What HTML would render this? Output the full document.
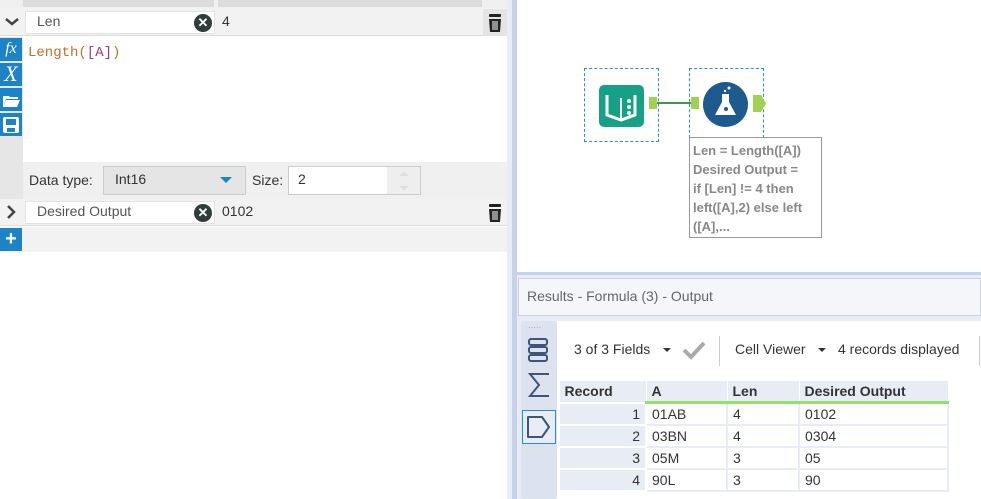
<!DOCTYPE html>
<html><head><meta charset="utf-8"><style>
*{box-sizing:border-box;margin:0;padding:0}
body{width:981px;height:499px;overflow:hidden;background:#fff;font-family:"Segoe UI","Liberation Sans",sans-serif;font-size:14px;color:#333;position:relative}
.a{position:absolute}
</style></head><body>
<div class="a" style="left:0;top:0;width:507px;height:499px;background:#fff"></div>
<div class="a" style="left:0;top:0;width:507px;height:8px;background:#f0f0f0"></div>
<div class="a" style="left:23px;top:0;width:191px;height:7px;background:#dcdcdc"></div>
<div class="a" style="left:218px;top:0;width:264px;height:7px;background:#dcdcdc"></div>
<div class="a" style="left:0;top:8px;width:507px;height:28px;background:#f2f2f2;border-bottom:1px solid #ddd"></div>
<div class="a" style="left:4px;top:9px;font-size:16px;color:#444">
<svg width="16" height="24"><path d="M2 10 L8 15 L14 10" stroke="#444" stroke-width="2.5" fill="none"/></svg></div>
<div class="a" style="left:25px;top:11px;width:190px;height:23px;background:#fff;border:1px solid #e3e3e3"></div>
<div class="a" style="left:37px;top:13px;color:#555">Len</div>
<div class="a" style="left:194px;top:14px;width:18px;height:18px;border-radius:50%;background:#2f3e3a;color:#fff;font-size:13px;font-weight:bold;text-align:center;line-height:18px">✕</div>
<div class="a" style="left:222px;top:13px">4</div>
<div class="a" style="left:483px;top:9px;width:24px;height:27px;background:#e4e4e4"></div>
<svg class="a" style="left:486px;top:12px" width="18" height="22"><rect x="3" y="2" width="12" height="3" rx="1" fill="#222"/><path d="M3 7 H15 L14 20 H4 Z" fill="#222"/><path d="M7 9 V18 M9 9V18 M11 9V18" stroke="#fff" stroke-width="1"/></svg>
<div class="a" style="left:0;top:37px;width:23px;height:162px;background:#e6e6e6"></div>
<div class="a" style="left:0;top:38px;width:22px;height:23px;background:#1c84c6;color:#fff;font-family:'Liberation Serif',serif;font-style:italic;font-size:16px;text-align:center;line-height:22px">fx</div>
<div class="a" style="left:0;top:63px;width:22px;height:23px;background:#1c84c6;color:#fff;font-family:'Liberation Serif',serif;font-style:italic;font-size:22px;text-align:center;line-height:22px">X</div>
<div class="a" style="left:0;top:88px;width:22px;height:23px;background:#1c84c6"><svg width="22" height="23"><path d="M3 8 H9 L10 9 H18 V11 H6 L3 19Z M6 12 H20 L17 19 H3Z" fill="#fff"/></svg></div>
<div class="a" style="left:0;top:113px;width:22px;height:23px;background:#1c84c6"><svg width="22" height="23"><rect x="3" y="4" width="16" height="16" rx="2" fill="#fff"/><rect x="6" y="6" width="10" height="6" fill="#1c84c6"/><rect x="7" y="15" width="8" height="4" fill="#1c84c6"/></svg></div>
<div class="a" style="left:28px;top:45px;font-family:'Liberation Mono',monospace;font-size:14px;color:#c0702a">Length(<span style="color:#a0397a">[A]</span>)</div>
<div class="a" style="left:23px;top:162px;width:484px;height:37px;background:#f0f0f0"></div>
<div class="a" style="left:29px;top:172px">Data type:</div>
<div class="a" style="left:103px;top:166px;width:143px;height:29px;background:#e5e5e5;border:1px solid #ccc"></div>
<div class="a" style="left:115px;top:171px">Int16</div>
<svg class="a" style="left:220px;top:177px" width="12" height="8"><path d="M0 0H12L6 6Z" fill="#1c84c6"/></svg>
<div class="a" style="left:252px;top:172px">Size:</div>
<div class="a" style="left:288px;top:166px;width:133px;height:29px;background:#fff;border:1px solid #ccc"></div>
<div class="a" style="left:387px;top:167px;width:33px;height:27px;background:#eee"></div>
<svg class="a" style="left:396px;top:169px" width="16" height="24"><path d="M3 7 L8 3 L13 7Z M3 17 L8 21 L13 17Z" fill="#ddd"/></svg>
<div class="a" style="left:298px;top:171px">2</div>
<div class="a" style="left:0;top:199px;width:507px;height:27px;background:#f2f2f2;border-bottom:1px solid #ddd"></div>
<svg class="a" style="left:4px;top:203px" width="14" height="18"><path d="M4 3 L10 9 L4 15" stroke="#444" stroke-width="2.5" fill="none"/></svg>
<div class="a" style="left:25px;top:201px;width:190px;height:23px;background:#fff;border:1px solid #e3e3e3"></div>
<div class="a" style="left:37px;top:203px;color:#555">Desired Output</div>
<div class="a" style="left:194px;top:204px;width:18px;height:18px;border-radius:50%;background:#2f3e3a;color:#fff;font-size:13px;font-weight:bold;text-align:center;line-height:18px">✕</div>
<div class="a" style="left:222px;top:203px">0102</div>
<svg class="a" style="left:486px;top:202px" width="18" height="22"><rect x="3" y="2" width="12" height="3" rx="1" fill="#222"/><path d="M3 7 H15 L14 20 H4 Z" fill="#222"/><path d="M7 9 V18 M9 9V18 M11 9V18" stroke="#fff" stroke-width="1"/></svg>
<div class="a" style="left:0;top:227px;width:507px;height:25px;background:#f2f2f2"></div>
<div class="a" style="left:0;top:228px;width:22px;height:23px;background:#1c84c6;color:#fff;font-size:20px;font-weight:bold;text-align:center;line-height:22px">+</div>
<div class="a" style="left:507px;top:0;width:5px;height:499px;background:#e8ecf4"></div>
<div class="a" style="left:512px;top:0;width:5px;height:499px;background:#c5d2ea"></div>
<div class="a" style="left:517px;top:0;width:464px;height:272px;background:#fff"></div>
<div class="a" style="left:584px;top:68px;width:75px;height:74px;border:1px dashed #2a8ae0"></div>
<div class="a" style="left:599px;top:85px;width:45px;height:42px;border-radius:5px;background:#16a085"></div>
<svg class="a" style="left:599px;top:85px" width="45" height="42"><path d="M8 10 V30 L22 35 L36 30 V10" stroke="#fff" stroke-width="3" fill="none"/><path d="M22 13 V34" stroke="#fff" stroke-width="2"/><circle cx="30" cy="16" r="2" fill="#fff"/><circle cx="30" cy="22" r="2" fill="#fff"/><circle cx="30" cy="28" r="2" fill="#fff"/></svg>
<div class="a" style="left:649px;top:97px;width:8px;height:12px;background:#9ed24f"></div>
<div class="a" style="left:657px;top:102px;width:36px;height:2px;background:#3a9a4a"></div>
<div class="a" style="left:689px;top:68px;width:75px;height:70px;border:1px dashed #2a8ae0"></div>
<div class="a" style="left:691px;top:97px;width:8px;height:12px;background:#9ed24f"></div>
<div class="a" style="left:703px;top:82px;width:45px;height:45px;border-radius:50%;background:#1d5a8e"></div>
<svg class="a" style="left:703px;top:82px" width="45" height="45"><path d="M19 12 V20 L12 33 H33 L26 20 V12Z" fill="#fff"/><circle cx="23" cy="27" r="2" fill="#1d5a8e"/><circle cx="26" cy="6" r="1.5" fill="#fff"/><circle cx="22" cy="9" r="1.2" fill="#fff"/></svg>
<svg class="a" style="left:753px;top:95px" width="14" height="17"><path d="M0 0H8L13 8.5L8 17H0Z" fill="#9ed24f"/></svg>
<div class="a" style="left:689px;top:137px;width:133px;height:101px;border:1px solid #999;background:#fff;padding:3px 3px;font-size:13px;font-weight:bold;color:#888;line-height:19px">Len = Length([A])<br>Desired Output =<br>if [Len] != 4 then<br>left([A],2) else left<br>([A],...</div>
<div class="a" style="left:517px;top:272px;width:464px;height:3px;background:#c5d2ea"></div>
<div class="a" style="left:517px;top:275px;width:464px;height:224px;background:#e8ecf4"></div>
<div class="a" style="left:518px;top:278px;width:463px;height:38px;background:#f4f6f9;border:1px solid #cfd3da"></div>
<div class="a" style="left:527px;top:288px;color:#666;font-size:14px">Results - Formula (3) - Output</div>
<div class="a" style="left:521px;top:321px;width:36px;height:178px;background:#dde3ee;border-radius:3px"></div>
<div class="a" style="left:528px;top:323px;font-size:8px;color:#999">·····</div>
<svg class="a" style="left:527px;top:337px" width="24" height="26"><rect x="2" y="2" width="18" height="6" rx="2" stroke="#3e5578" stroke-width="2" fill="none"/><rect x="2" y="10" width="18" height="6" rx="2" stroke="#3e5578" stroke-width="2" fill="none"/><rect x="2" y="18" width="18" height="6" rx="2" stroke="#3e5578" stroke-width="2" fill="none"/></svg>
<svg class="a" style="left:527px;top:372px" width="24" height="26"><path d="M22 2 H3 L12 13 L3 24 H22" stroke="#3e5578" stroke-width="2" fill="none"/></svg>
<div class="a" style="left:522px;top:410px;width:34px;height:34px;border:1px solid #2a8ae0;background:#e8ecf4"></div>
<svg class="a" style="left:526px;top:415px" width="26" height="24"><path d="M2 2 H16 L23 12 L16 22 H2Z" stroke="#3e5578" stroke-width="2" fill="none" stroke-linejoin="round"/></svg>
<div class="a" style="left:557px;top:321px;width:424px;height:58px;background:#fff"></div>
<div class="a" style="left:574px;top:341px;font-size:14px;color:#333">3 of 3 Fields</div>
<svg class="a" style="left:663px;top:348px" width="8" height="5"><path d="M0 0H8L4 4Z" fill="#333"/></svg>
<svg class="a" style="left:682px;top:340px" width="24" height="20"><path d="M2 10 L9 17 L22 3" stroke="#aaa" stroke-width="4" fill="none"/></svg>
<div class="a" style="left:719px;top:336px;width:1px;height:30px;background:#ccc"></div>
<div class="a" style="left:735px;top:341px;font-size:14px;color:#333">Cell Viewer</div>
<svg class="a" style="left:818px;top:348px" width="8" height="5"><path d="M0 0H8L4 4Z" fill="#333"/></svg>
<div class="a" style="left:838px;top:341px;font-size:14px;color:#333">4 records displayed</div>
<div class="a" style="left:979px;top:336px;width:1px;height:30px;background:#ccc"></div>
<div class="a" style="left:557px;top:379px;width:424px;height:120px;background:#fff"></div>
<table class="a" style="left:558px;top:380px;border-collapse:collapse;font-size:14px;color:#333">
<tr style="background:#e8ecf4;font-weight:bold;height:22px">
<td style="width:87px;padding-left:5px;border:1px solid #fff">Record</td>
<td style="width:81px;padding-left:5px;border:1px solid #fff;border-bottom:3px solid #8ee36a">A</td>
<td style="width:72px;padding-left:5px;border:1px solid #fff;border-bottom:3px solid #8ee36a">Len</td>
<td style="width:149px;padding-left:5px;border:1px solid #fff;border-bottom:3px solid #8ee36a">Desired Output</td></tr>
<tr style="height:22px"><td style="background:#e8ecf4;text-align:right;padding-right:5px;border:2px solid #fff">1</td><td style="padding-left:5px;border:2px solid #e8ecf4">01AB</td><td style="padding-left:5px;border:2px solid #e8ecf4">4</td><td style="padding-left:5px;border:2px solid #e8ecf4">0102</td></tr>
<tr style="height:22px"><td style="background:#e8ecf4;text-align:right;padding-right:5px;border:2px solid #fff">2</td><td style="padding-left:5px;border:2px solid #e8ecf4">03BN</td><td style="padding-left:5px;border:2px solid #e8ecf4">4</td><td style="padding-left:5px;border:2px solid #e8ecf4">0304</td></tr>
<tr style="height:22px"><td style="background:#e8ecf4;text-align:right;padding-right:5px;border:2px solid #fff">3</td><td style="padding-left:5px;border:2px solid #e8ecf4">05M</td><td style="padding-left:5px;border:2px solid #e8ecf4">3</td><td style="padding-left:5px;border:2px solid #e8ecf4">05</td></tr>
<tr style="height:22px"><td style="background:#e8ecf4;text-align:right;padding-right:5px;border:2px solid #fff">4</td><td style="padding-left:5px;border:2px solid #e8ecf4">90L</td><td style="padding-left:5px;border:2px solid #e8ecf4">3</td><td style="padding-left:5px;border:2px solid #e8ecf4">90</td></tr>
</table>
</body></html>
